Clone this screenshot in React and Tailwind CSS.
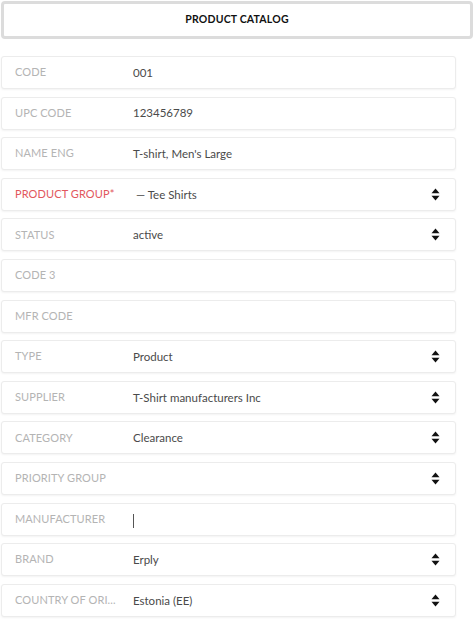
import React from 'react';

const fields = [
  { label: 'CODE', value: '001' },
  { label: 'UPC CODE', value: '123456789' },
  { label: 'NAME ENG', value: "T-shirt, Men's Large" },
  { label: 'PRODUCT GROUP*', value: '— Tee Shirts', select: true, required: true },
  { label: 'STATUS', value: 'active', select: true },
  { label: 'CODE 3', value: '' },
  { label: 'MFR CODE', value: '' },
  { label: 'TYPE', value: 'Product', select: true },
  { label: 'SUPPLIER', value: 'T-Shirt manufacturers Inc', select: true },
  { label: 'CATEGORY', value: 'Clearance', select: true },
  { label: 'PRIORITY GROUP', value: '', select: true },
  { label: 'MANUFACTURER', value: '', cursor: true },
  { label: 'BRAND', value: 'Erply', select: true },
  { label: 'COUNTRY OF ORI...', value: 'Estonia (EE)', select: true },
];

const SortIcon = () => (
  <svg width="9" height="13" viewBox="0 0 9 13" className="shrink-0">
    <path d="M4.5 0.5 L8.5 5.2 L0.5 5.2 Z" fill="#111" />
    <path d="M4.5 12.5 L8.5 7.8 L0.5 7.8 Z" fill="#111" />
  </svg>
);

const FieldRow = ({ field }) => (
  <div className="flex items-center h-[33px] w-[455px] ml-[1px] bg-white border border-[#ececec] rounded-[3px] shadow-[0_1px_2px_rgba(0,0,0,0.05)]">
    <div className={`w-[131px] pl-[13px] pr-[6px] text-[11px] tracking-[0.1px] truncate ${field.required ? 'text-[#e2575d]' : 'text-[#b4b4b4]'}`}>
      {field.label}
    </div>
    <div className={`flex-1 text-[11.5px] text-[#4a4a4a] ${field.required ? 'pl-[3px]' : ''}`}>
      {field.cursor ? <span className="inline-block w-[1px] h-[14px] bg-[#555] align-middle" /> : field.value}
    </div>
    {field.select && (
      <div className="pr-[15px]">
        <SortIcon />
      </div>
    )}
  </div>
);

export default function App() {
  return (
    <div className="w-[474px] h-[622px] bg-white overflow-hidden" style={{ fontFamily: 'Lato, "Liberation Sans", sans-serif' }}>
      <div className="mx-[1px] mt-[1px] h-[38px] border-[3px] border-[#dcdcdc] rounded-[4px] flex items-center justify-center">
        <span className="text-[10.5px] font-bold text-[#111] tracking-[0.2px]">PRODUCT CATALOG</span>
      </div>
      <div className="mt-[17px] flex flex-col gap-[7.6px]">
        {fields.map((f) => (
          <FieldRow key={f.label} field={f} />
        ))}
      </div>
    </div>
  );
}
